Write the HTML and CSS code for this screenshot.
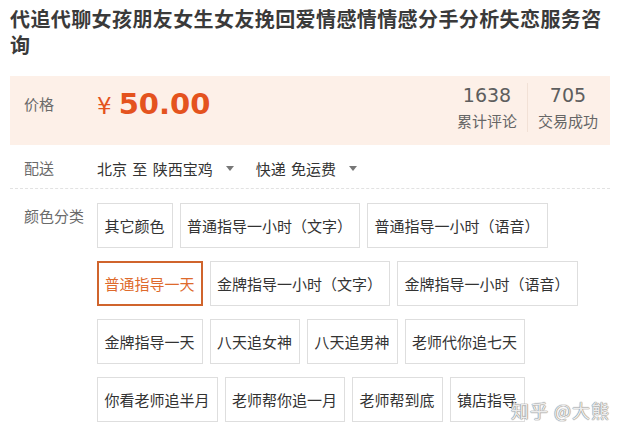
FILE: index.html
```html
<!doctype html>
<html>
<head>
	<meta charset='utf-8' />
	<title>宝贝详情</title>
	<link rel="stylesheet" href="styles.css">
</head>

<body>
	<div class='page'>
		<h1 class='title'>代追代聊女孩朋友女生女友挽回爱情感情情感分手分析失恋服务咨询</h1>

		<!--价格-->
		<div class='price-box'>
			<span class='label'>价格</span>
			<div class='price'><span class='yen'>¥</span><span class='num'>50.00</span></div>
			<div class='stats'>
				<div class='stat'><b>1638</b><span>累计评论</span></div>
				<div class='stat'><b>705</b><span>交易成功</span></div>
			</div>
		</div>

		<!--配送-->
		<div class='delivery'>
			<span class='label'>配送</span>
			<span class='sel'>北京 至 陕西宝鸡<i class='caret'></i></span>
			<span class='sel'>快递 免运费<i class='caret'></i></span>
		</div>

		<!--颜色分类-->
		<div class='sku'>
			<span class='label'>颜色分类</span>
			<ul class='opts'>
				<li>其它颜色</li>
				<li>普通指导一小时（文字）</li>
				<li>普通指导一小时（语音）</li>
				<li class='on'>普通指导一天</li>
				<li>金牌指导一小时（文字）</li>
				<li>金牌指导一小时（语音）</li>
				<li>金牌指导一天</li>
				<li>八天追女神</li>
				<li>八天追男神</li>
				<li>老师代你追七天</li>
				<li>你看老师追半月</li>
				<li>老师帮你追一月</li>
				<li>老师帮到底</li>
				<li>镇店指导</li>
				<li class='more'></li>
			</ul>
		</div>

		<div class='watermark'>知乎 @大熊</div>
	</div>
</body>
</html>
```

FILE: styles.css
```css
/*reset*/
html,body{margin:0;padding:0;overflow:hidden;}
body{font-family:"Noto Sans CJK SC","Microsoft YaHei",sans-serif;color:#333;background:#fff;}

.page{position:relative;height:435px;box-sizing:border-box;padding:6px 16px 0 10px;overflow:hidden;}

.title{margin:0;font-size:20px;line-height:26px;font-weight:bold;color:#3a3a3a;letter-spacing:.4px;}

.label{flex:none;width:73px;font-size:15px;line-height:20px;color:#6a6a6a;}

/*价格区*/
.price-box{display:flex;align-items:flex-start;height:69px;margin-top:18px;padding-left:14px;background:#fdf0e8;}
.price-box .label{margin-top:18px;}
.price{display:flex;align-items:baseline;height:36px;line-height:36px;margin-top:10px;color:#e4531e;}
.yen{font-family:"DejaVu Sans",sans-serif;font-size:23px;margin-right:7px;}
.num{font-family:"DejaVu Sans",sans-serif;font-size:29px;font-weight:bold;}

.stats{display:flex;margin:7px 2px 0 auto;}
.stat{display:flex;flex-direction:column;align-items:center;width:80px;height:49px;}
.stat + .stat{border-left:1px solid #f2e1d6;}
.stat b{font-family:"DejaVu Sans",sans-serif;font-size:19px;font-weight:normal;line-height:24px;color:#5e5e5e;}
.stat span{margin-top:4px;font-size:15px;line-height:20px;color:#666;}

/*配送*/
.delivery{display:flex;align-items:center;height:40px;margin-top:3px;padding-left:14px;border-bottom:1px dashed #e2e2e2;}
.sel{display:flex;align-items:center;margin-right:22px;font-size:15px;word-spacing:2px;color:#333;}
.caret{width:0;height:0;margin-left:13px;border-left:4px solid transparent;border-right:4px solid transparent;border-top:5px solid #777;}

/*颜色分类*/
.sku{display:flex;align-items:flex-start;padding:14px 0 0 14px;}
.sku .label{margin-top:3px;}
.opts{display:flex;flex-wrap:wrap;gap:13px 7px;flex:1;margin:0;padding:0;list-style:none;}
.opts li{display:flex;align-items:center;height:45px;box-sizing:border-box;padding:0 7px 0 6.5px;border:1px solid #dedede;font-size:15px;color:#333;background:#fff;}
.opts li.on{padding:0 6px 0 5.5px;border:2px solid #d0642c;color:#de6a2c;}
.opts li.more{width:107px;}

.watermark{position:absolute;right:16px;top:400px;font-size:18px;line-height:20px;letter-spacing:1px;color:rgba(255,255,255,.85);text-shadow:0 0 1px #8a8a8a,0 0 1px #8a8a8a,0 0 1px #8a8a8a;}
```
